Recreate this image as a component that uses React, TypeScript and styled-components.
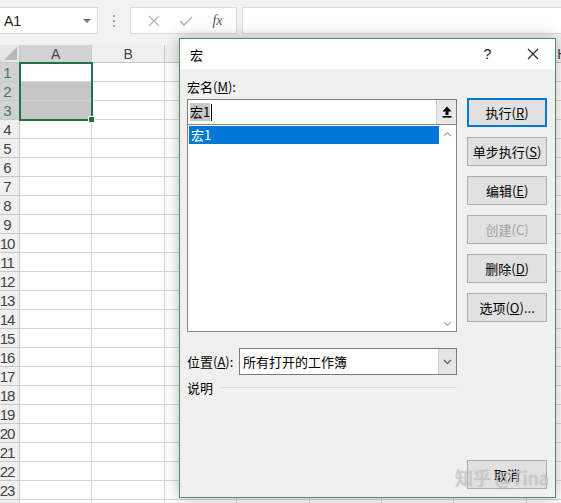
import React from "react";
import styled, { createGlobalStyle } from "styled-components";

const GlobalStyle = createGlobalStyle`
  html, body { margin: 0; padding: 0; overflow: hidden; background: #fff; }
  body { font-family: "Noto Sans CJK SC", "Liberation Sans", sans-serif; }
`;

const ui = `"Noto Sans CJK SC", "Liberation Sans", sans-serif`;
const green = "#217346";

const Page = styled.div`
  position: relative;
  width: 561px;
  height: 503px;
  overflow: hidden;
  background: #fff;
`;

// ---- formula bar ----
const FormulaBar = styled.div`
  display: flex;
  align-items: flex-start;
  height: 45px;
  box-sizing: border-box;
  padding-top: 7px;
  background: #f2f2f2;
`;

const NameBox = styled.div`
  width: 98px;
  height: 27px;
  box-sizing: border-box;
  background: #fff;
  border: 1px solid #d6d6d6;
  border-left: none;
  display: flex;
  align-items: center;
  justify-content: space-between;
  padding: 0 6px 0 4px;
  font: 14px "Liberation Sans", sans-serif;
  color: #222;
`;

const Caret = styled.span`
  width: 0;
  height: 0;
  border-left: 4px solid transparent;
  border-right: 4px solid transparent;
  border-top: 4px solid #777;
`;

const Grip = styled.div`
  width: 32px;
  height: 27px;
  display: flex;
  flex-direction: column;
  align-items: center;
  justify-content: center;
  gap: 3px;
  span {
    width: 2px;
    height: 2px;
    background: #a6a6a6;
  }
`;

const FxGroup = styled.div`
  width: 107px;
  height: 27px;
  box-sizing: border-box;
  background: #fff;
  border: 1px solid #dadada;
  display: flex;
  align-items: center;
  justify-content: space-around;
  padding: 0 4px 0 8px;
`;

const FxLabel = styled.span`
  font: italic 14px "Liberation Serif", serif;
  color: #555;
`;

const FormulaInput = styled.div`
  flex: 1;
  height: 27px;
  margin-left: 5px;
  box-sizing: border-box;
  background: #fff;
  border: 1px solid #dadada;
  border-right: none;
`;

// ---- sheet ----
const Sheet = styled.div`
  position: relative;
  display: grid;
  grid-template-columns: 20px repeat(8, 72.4px);
  grid-template-rows: 18px repeat(24, 19px);
`;

const Corner = styled.div`
  position: relative;
  background: #e6e6e6;
  border-right: 1px solid #c8c8c8;
  border-bottom: 1px solid #c8c8c8;
  overflow: hidden;
  &::after {
    content: "";
    position: absolute;
    right: 2px;
    bottom: 2px;
    border-left: 13px solid transparent;
    border-bottom: 13px solid #b9b9b9;
  }
`;

const ColHead = styled.div<{ $sel?: boolean }>`
  background: ${(p) => (p.$sel ? "#d2d2d2" : "#f0f0f0")};
  border-right: 1px solid #c8c8c8;
  border-bottom: 1px solid #c8c8c8;
  box-sizing: border-box;
  display: flex;
  align-items: center;
  justify-content: center;
  font: 14px "Liberation Sans", sans-serif;
  color: #444;
`;

const RowHead = styled.div<{ $sel?: boolean }>`
  background: ${(p) => (p.$sel ? "#d2d2d2" : "#f0f0f0")};
  border-right: 1px solid ${(p) => (p.$sel ? green : "#c8c8c8")};
  border-bottom: 1px solid #c8c8c8;
  box-sizing: border-box;
  display: flex;
  align-items: center;
  justify-content: center;
  padding-right: 5px;
  font: 15px "Liberation Sans", sans-serif;
  letter-spacing: -1px;
  color: ${(p) => (p.$sel ? "#3f7a55" : "#444")};
`;

const Cell = styled.div<{ $fill?: boolean }>`
  background: ${(p) => (p.$fill ? "#c6c6c6" : "#fff")};
  border-right: 1px solid #d4d4d4;
  border-bottom: 1px solid #d4d4d4;
  box-sizing: border-box;
`;

const Selection = styled.div`
  position: absolute;
  left: 19px;
  top: 17px;
  width: 74px;
  height: 59px;
  box-sizing: border-box;
  border: 2px solid ${green};
  pointer-events: none;
  &::after {
    content: "";
    position: absolute;
    right: -4px;
    bottom: -4px;
    width: 5px;
    height: 5px;
    background: ${green};
    border: 1px solid #fff;
  }
`;

// ---- dialog ----
const Dialog = styled.div`
  position: absolute;
  left: 179px;
  top: 38px;
  width: 377px;
  height: 460px;
  box-sizing: border-box;
  border: 1px solid #4f8f63;
  background: #f0f0f0;
  box-shadow: 0 0 14px rgba(0, 0, 0, 0.28);
  display: flex;
  flex-direction: column;
  font-family: ${ui};
  font-size: 13px;
  color: #000;
`;

const TitleBar = styled.div`
  height: 30px;
  flex: none;
  background: #fff;
  display: flex;
  align-items: center;
  padding-left: 10px;
`;

const Title = styled.span`
  flex: 1;
  font-size: 13px;
`;

const TitleButton = styled.span`
  width: 45px;
  display: flex;
  justify-content: center;
  align-items: center;
  font: 14px "Liberation Sans", sans-serif;
  color: #222;
`;

const Body = styled.div`
  flex: 1;
  display: flex;
  padding: 10px 8px 8px 7px;
`;

const LeftCol = styled.div`
  width: 271px;
  display: flex;
  flex-direction: column;
`;

const RightCol = styled.div`
  width: 80px;
  margin-left: 10px;
  padding-top: 19px;
  display: flex;
  flex-direction: column;
  gap: 10px;
`;

const Label = styled.div`
  line-height: 16px;
  height: 16px;
  margin-bottom: 4px;
  white-space: nowrap;
`;

const NameInput = styled.div`
  height: 26px;
  box-sizing: border-box;
  background: #fff;
  border: 1px solid #7a7a7a;
  display: flex;
  align-items: center;
`;

const InputText = styled.div`
  flex: 1;
  display: flex;
  align-items: center;
  padding-left: 2px;
  line-height: 18px;
`;

const Highlight = styled.span`
  background: #c8c8c8;
`;

const TextCaret = styled.span`
  width: 1px;
  height: 17px;
  background: #000;
  margin-left: 1px;
`;

const RefButton = styled.div`
  width: 19px;
  height: 24px;
  display: flex;
  align-items: center;
  justify-content: center;
  background: #e8e8e8;
  border-left: 1px solid #d0d0d0;
`;

const List = styled.div`
  height: 208px;
  box-sizing: border-box;
  margin-top: -1px;
  background: #fff;
  border: 1px solid #828790;
  display: flex;
`;

const ListItems = styled.div`
  flex: 1;
  padding: 1px 0 0 1px;
`;

const ListItem = styled.div<{ $active?: boolean }>`
  height: 18px;
  line-height: 18px;
  padding-left: 2px;
  background: ${(p) => (p.$active ? "#0078d7" : "transparent")};
  color: ${(p) => (p.$active ? "#fff" : "#000")};
`;

const ScrollTrack = styled.div`
  width: 17px;
  display: flex;
  flex-direction: column;
  justify-content: space-between;
  align-items: center;
  padding: 6px 0 4px;
`;

const LocationRow = styled.div`
  margin-top: 16px;
  display: flex;
  align-items: center;
`;

const LocationLabel = styled.span`
  width: 52px;
  white-space: nowrap;
`;

const Select = styled.div`
  flex: 1;
  height: 27px;
  box-sizing: border-box;
  background: #fff;
  border: 1px solid #7a7a7a;
  display: flex;
  align-items: center;
`;

const SelectText = styled.span`
  flex: 1;
  padding-left: 3px;
`;

const SelectButton = styled.div`
  width: 17px;
  height: 25px;
  display: flex;
  align-items: center;
  justify-content: center;
  background: #e5e5e5;
  border-left: 1px solid #cfcfcf;
`;

const Group = styled.div`
  margin-top: 3px;
  display: flex;
  align-items: center;
  gap: 8px;
  &::after {
    content: "";
    flex: 1;
    height: 1px;
    background: #dcdcdc;
  }
`;

const Button = styled.div<{ $default?: boolean; $disabled?: boolean }>`
  height: 29px;
  box-sizing: border-box;
  background: #e1e1e1;
  border: ${(p) => (p.$default ? "2px solid #0078d7" : "1px solid #adadad")};
  display: flex;
  align-items: center;
  justify-content: center;
  white-space: nowrap;
  color: ${(p) => (p.$disabled ? "#a0a0a0" : "#000")};
`;

const CancelButton = styled(Button)`
  margin-top: auto;
`;

const Watermark = styled.div`
  position: absolute;
  left: 455px;
  top: 464px;
  font: 18px ${ui};
  color: rgba(225, 225, 225, 0.7);
  text-shadow: 0 0 1px rgba(90, 90, 90, 0.6);
  white-space: nowrap;
  pointer-events: none;
`;

const cols = ["A", "B", "C", "D", "E", "F", "G", "H"];
const rows = Array.from({ length: 24 }, (_, i) => i + 1);

const Chevron = ({ up }: { up?: boolean }) => (
  <svg width="9" height="6" viewBox="0 0 9 6">
    <path
      d={up ? "M1 5 L4.5 1.5 L8 5" : "M1 1 L4.5 4.5 L8 1"}
      fill="none"
      stroke="#a8a8a8"
      strokeWidth="1.2"
    />
  </svg>
);

const App = () => (
  <Page>
    <GlobalStyle />
    <FormulaBar>
      <NameBox>
        A1
        <Caret />
      </NameBox>
      <Grip>
        <span />
        <span />
        <span />
      </Grip>
      <FxGroup>
        <svg width="12" height="12" viewBox="0 0 12 12">
          <path d="M1 1 L11 11 M11 1 L1 11" stroke="#b5b5b5" strokeWidth="1.3" />
        </svg>
        <svg width="14" height="12" viewBox="0 0 14 12">
          <path d="M1 6 L5 10 L13 2" fill="none" stroke="#b5b5b5" strokeWidth="1.6" />
        </svg>
        <FxLabel>fx</FxLabel>
      </FxGroup>
      <FormulaInput />
    </FormulaBar>

    <Sheet>
      <Corner />
      {cols.map((c) => (
        <ColHead key={c} $sel={c === "A"}>
          {c}
        </ColHead>
      ))}
      {rows.map((r) => (
        <React.Fragment key={r}>
          <RowHead $sel={r <= 3}>{r}</RowHead>
          {cols.map((c) => (
            <Cell key={c} $fill={c === "A" && (r === 2 || r === 3)} />
          ))}
        </React.Fragment>
      ))}
      <Selection />
    </Sheet>

    <Dialog>
      <TitleBar>
        <Title>宏</Title>
        <TitleButton>?</TitleButton>
        <TitleButton>
          <svg width="12" height="12" viewBox="0 0 12 12">
            <path d="M1 1 L11 11 M11 1 L1 11" stroke="#222" strokeWidth="1.1" />
          </svg>
        </TitleButton>
      </TitleBar>
      <Body>
        <LeftCol>
          <Label>
            宏名(<u>M</u>):
          </Label>
          <NameInput>
            <InputText>
              <Highlight>宏1</Highlight>
              <TextCaret />
            </InputText>
            <RefButton>
              <svg width="10" height="12" viewBox="0 0 10 12">
                <path d="M5 0.5 L9.5 5.5 L6.5 5.5 L6.5 9 L3.5 9 L3.5 5.5 L0.5 5.5 Z" fill="#000" />
                <rect x="0.5" y="10" width="9" height="1.6" fill="#000" />
              </svg>
            </RefButton>
          </NameInput>
          <List>
            <ListItems>
              <ListItem $active>宏1</ListItem>
            </ListItems>
            <ScrollTrack>
              <Chevron up />
              <Chevron />
            </ScrollTrack>
          </List>
          <LocationRow>
            <LocationLabel>
              位置(<u>A</u>):
            </LocationLabel>
            <Select>
              <SelectText>所有打开的工作簿</SelectText>
              <SelectButton>
                <svg width="9" height="6" viewBox="0 0 9 6">
                  <path d="M1 1 L4.5 4.5 L8 1" fill="none" stroke="#555" strokeWidth="1.1" />
                </svg>
              </SelectButton>
            </Select>
          </LocationRow>
          <Group>说明</Group>
        </LeftCol>
        <RightCol>
          <Button $default>
            执行(<u>R</u>)
          </Button>
          <Button>
            单步执行(<u>S</u>)
          </Button>
          <Button>
            编辑(<u>E</u>)
          </Button>
          <Button $disabled>创建(C)</Button>
          <Button>
            删除(<u>D</u>)
          </Button>
          <Button>
            选项(<u>O</u>)...
          </Button>
          <CancelButton>取消</CancelButton>
        </RightCol>
      </Body>
    </Dialog>
    <Watermark>知乎 @Tina</Watermark>
  </Page>
);

export default App;
